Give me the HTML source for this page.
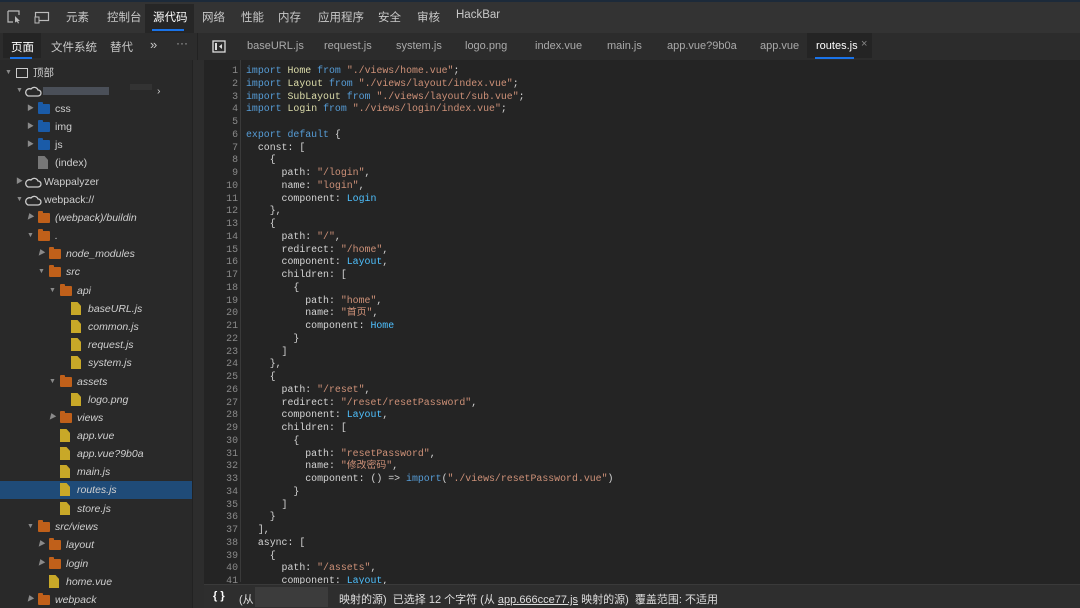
<!DOCTYPE html>
<html><head><meta charset="utf-8"><style>
*{margin:0;padding:0;box-sizing:border-box}
body{width:1080px;height:608px;overflow:hidden;background:#242424;font-family:"Liberation Sans","Noto Sans CJK SC",sans-serif;position:relative;color:#ccc}
.abs{position:absolute}
#top{left:0;top:0;width:1080px;height:33px;background:#333;border-top:2px solid #1c2a3a}
#top span{position:absolute;top:7px;font-size:11.5px;color:#c8c8c8}
#sub{left:0;top:33px;width:1080px;height:27px;background:#2c2c2c}
#side{left:0;top:60px;width:192px;height:548px;background:#292929;overflow:hidden}
#scroll{left:192px;top:60px;width:12px;height:548px;background:#2d2d2d;border-left:1px solid #222}
.row{position:absolute;left:0;width:192px;height:18px;font-size:10.5px;color:#cfcfcf;line-height:18px;white-space:nowrap}
.row.it{font-style:italic}
.arr{position:absolute;top:0;font-size:7px;color:#8a8a8a}
.fold{position:absolute;top:4px;width:12px;height:10px;border-radius:1px}
.fold:before{content:"";position:absolute;left:0;top:-2px;width:5px;height:3px;background:inherit;border-radius:1px 1px 0 0}
.file{position:absolute;top:2px;width:10px;height:13px;background:#c8a828;clip-path:polygon(0 0,65% 0,100% 30%,100% 100%,0 100%)}
.lbl{position:absolute;top:0}
#gut{left:204px;top:60px;width:37px;height:522px;border-right:1px solid #3a3a3a;background:#242424}
#code{left:204px;top:65px;font-family:"Liberation Mono","DejaVu Sans Mono","Noto Sans CJK SC",monospace;font-size:9.9px;line-height:12.75px;white-space:pre;color:#d4d4d4}
.ln{display:inline-block;width:34px;text-align:right;color:#8a8a8a;margin-right:8px}
.k{color:#569cd6}.s{color:#ce9178}.y{color:#dcdcaa}.v{color:#4fc1ff}
#status{left:204px;top:584px;width:876px;height:24px;background:#2e2e2e;border-top:1px solid #3a3a3a;font-size:11px;color:#ddd}
</style></head><body>
<div id="top" class="abs">
<svg class="abs" style="left:7px;top:8px" width="16" height="14"><path d="M1 1h11v4M1 1v11h5" fill="none" stroke="#bbb" stroke-width="1.2"/><path d="M8 6l5 5-2 0 1 2-1 .5-1-2-2 1z" fill="#bbb"/></svg>
<svg class="abs" style="left:34px;top:9px" width="16" height="13"><rect x="1.5" y="1.5" width="13" height="8" fill="none" stroke="#bbb" stroke-width="1.2"/><rect x="1" y="6" width="4" height="6" fill="#333" stroke="#bbb" stroke-width="1"/></svg>
<span style="left:66px">元素</span><span style="left:107px">控制台</span>
<div class="abs" style="left:145px;top:2px;width:49px;height:29px;background:#262626"></div>
<span style="left:153px;color:#fff">源代码</span>
<div class="abs" style="left:152px;top:27px;width:32px;height:2px;background:#1a73e8"></div>
<span style="left:202px">网络</span><span style="left:241px">性能</span><span style="left:278px">内存</span><span style="left:318px">应用程序</span><span style="left:378px">安全</span><span style="left:417px">审核</span><span style="left:456px">HackBar</span>
</div>
<div id="sub" class="abs">
<div class="abs" style="left:3px;top:0;width:38px;height:25px;background:#242424"></div>
<span class="abs" style="left:11px;top:6px;font-size:11.5px;color:#fff">页面</span>
<div class="abs" style="left:10px;top:24px;width:22px;height:2px;background:#1a73e8"></div>
<span class="abs" style="left:51px;top:6px;font-size:11.5px;color:#c8c8c8">文件系统</span>
<span class="abs" style="left:110px;top:6px;font-size:11.5px;color:#c8c8c8">替代</span>
<span class="abs" style="left:150px;top:4px;font-size:13px;color:#c8c8c8">»</span>
<span class="abs" style="left:176px;top:3px;font-size:12px;color:#aaa">···</span>
<div class="abs" style="left:197px;top:0;width:1px;height:27px;background:#222"></div>
<svg class="abs" style="left:212px;top:7px" width="14" height="13"><rect x="1" y="1" width="12" height="11" fill="none" stroke="#ddd" stroke-width="1.3"/><rect x="3" y="3" width="2" height="7" fill="#ddd"/><path d="M10 4v5l-3-2.5z" fill="#ddd"/></svg>
<span class="abs" style="left:247px;top:7px;font-size:11px;color:#aaa">baseURL.js</span>
<span class="abs" style="left:324px;top:7px;font-size:11px;color:#aaa">request.js</span>
<span class="abs" style="left:396px;top:7px;font-size:11px;color:#aaa">system.js</span>
<span class="abs" style="left:465px;top:7px;font-size:11px;color:#aaa">logo.png</span>
<span class="abs" style="left:535px;top:7px;font-size:11px;color:#aaa">index.vue</span>
<span class="abs" style="left:607px;top:7px;font-size:11px;color:#aaa">main.js</span>
<span class="abs" style="left:667px;top:7px;font-size:11px;color:#aaa">app.vue?9b0a</span>
<span class="abs" style="left:760px;top:7px;font-size:11px;color:#aaa">app.vue</span>
<div class="abs" style="left:807px;top:0;width:65px;height:25px;background:#242424"></div>
<span class="abs" style="left:816px;top:7px;font-size:11px;color:#fff">routes.js</span>
<span class="abs" style="left:861px;top:5px;font-size:11px;color:#888">×</span>
<div class="abs" style="left:815px;top:24px;width:39px;height:2px;background:#1a73e8"></div>
</div>
<div id="side" class="abs">
<div class="row" style="top:4px"><span class="arr" style="left:5px">▼</span><span class="abs" style="left:16px;top:4px;width:12px;height:10px;border:1.5px solid #ccc"></span><span class="lbl" style="left:33px">顶部</span></div>
<div class="row" style="top:22px"><span class="arr" style="left:16px">▼</span><svg class="abs" style="left:24px;top:4px" width="18" height="11"><path d="M4 10h10a3 3 0 0 0 0-6 4 4 0 0 0-7-1 3.5 3.5 0 0 0-3 7z" fill="none" stroke="#ccc" stroke-width="1.3"/></svg><span class="abs" style="left:43px;top:5px;width:66px;height:8px;background:#4a4f58"></span><span class="abs" style="left:130px;top:2px;width:22px;height:6px;background:#333"></span><span class="lbl" style="left:157px">›</span></div>
<div class="row" style="top:40px"><span class="arr" style="left:27px">▶</span><span class="fold" style="left:38px;background:#1a5ba8"></span><span class="lbl" style="left:55px">css</span></div>
<div class="row" style="top:58px"><span class="arr" style="left:27px">▶</span><span class="fold" style="left:38px;background:#1a5ba8"></span><span class="lbl" style="left:55px">img</span></div>
<div class="row" style="top:76px"><span class="arr" style="left:27px">▶</span><span class="fold" style="left:38px;background:#1a5ba8"></span><span class="lbl" style="left:55px">js</span></div>
<div class="row" style="top:94px"><span class="file" style="left:38px;background:#777"></span><span class="lbl" style="left:55px">(index)</span></div>
<div class="row" style="top:113px"><span class="arr" style="left:16px">▶</span><svg class="abs" style="left:24px;top:4px" width="18" height="11"><path d="M4 10h10a3 3 0 0 0 0-6 4 4 0 0 0-7-1 3.5 3.5 0 0 0-3 7z" fill="none" stroke="#ccc" stroke-width="1.3"/></svg><span class="lbl" style="left:44px">Wappalyzer</span></div>
<div class="row" style="top:131px"><span class="arr" style="left:16px">▼</span><svg class="abs" style="left:24px;top:4px" width="18" height="11"><path d="M4 10h10a3 3 0 0 0 0-6 4 4 0 0 0-7-1 3.5 3.5 0 0 0-3 7z" fill="none" stroke="#ccc" stroke-width="1.3"/></svg><span class="lbl" style="left:44px">webpack://</span></div>
<div class="row it" style="top:149px"><span class="arr" style="left:27px">▶</span><span class="fold" style="left:38px;background:#c0601a"></span><span class="lbl" style="left:55px">(webpack)/buildin</span></div>
<div class="row it" style="top:167px"><span class="arr" style="left:27px">▼</span><span class="fold" style="left:38px;background:#c0601a"></span><span class="lbl" style="left:55px">.</span></div>
<div class="row it" style="top:185px"><span class="arr" style="left:38px">▶</span><span class="fold" style="left:49px;background:#c0601a"></span><span class="lbl" style="left:66px">node_modules</span></div>
<div class="row it" style="top:203px"><span class="arr" style="left:38px">▼</span><span class="fold" style="left:49px;background:#c0601a"></span><span class="lbl" style="left:66px">src</span></div>
<div class="row it" style="top:222px"><span class="arr" style="left:49px">▼</span><span class="fold" style="left:60px;background:#c0601a"></span><span class="lbl" style="left:77px">api</span></div>
<div class="row it" style="top:240px"><span class="file" style="left:71px"></span><span class="lbl" style="left:88px">baseURL.js</span></div>
<div class="row it" style="top:258px"><span class="file" style="left:71px"></span><span class="lbl" style="left:88px">common.js</span></div>
<div class="row it" style="top:276px"><span class="file" style="left:71px"></span><span class="lbl" style="left:88px">request.js</span></div>
<div class="row it" style="top:294px"><span class="file" style="left:71px"></span><span class="lbl" style="left:88px">system.js</span></div>
<div class="row it" style="top:313px"><span class="arr" style="left:49px">▼</span><span class="fold" style="left:60px;background:#c0601a"></span><span class="lbl" style="left:77px">assets</span></div>
<div class="row it" style="top:331px"><span class="file" style="left:71px"></span><span class="lbl" style="left:88px">logo.png</span></div>
<div class="row it" style="top:349px"><span class="arr" style="left:49px">▶</span><span class="fold" style="left:60px;background:#c0601a"></span><span class="lbl" style="left:77px">views</span></div>
<div class="row it" style="top:367px"><span class="file" style="left:60px"></span><span class="lbl" style="left:77px">app.vue</span></div>
<div class="row it" style="top:385px"><span class="file" style="left:60px"></span><span class="lbl" style="left:77px">app.vue?9b0a</span></div>
<div class="row it" style="top:403px"><span class="file" style="left:60px"></span><span class="lbl" style="left:77px">main.js</span></div>
<div class="row it" style="top:421px;background:#1f4b78"><span class="file" style="left:60px"></span><span class="lbl" style="left:77px">routes.js</span></div>
<div class="row it" style="top:440px"><span class="file" style="left:60px"></span><span class="lbl" style="left:77px">store.js</span></div>
<div class="row it" style="top:458px"><span class="arr" style="left:27px">▼</span><span class="fold" style="left:38px;background:#c0601a"></span><span class="lbl" style="left:55px">src/views</span></div>
<div class="row it" style="top:476px"><span class="arr" style="left:38px">▶</span><span class="fold" style="left:49px;background:#c0601a"></span><span class="lbl" style="left:66px">layout</span></div>
<div class="row it" style="top:495px"><span class="arr" style="left:38px">▶</span><span class="fold" style="left:49px;background:#c0601a"></span><span class="lbl" style="left:66px">login</span></div>
<div class="row it" style="top:513px"><span class="file" style="left:49px"></span><span class="lbl" style="left:66px">home.vue</span></div>
<div class="row it" style="top:531px"><span class="arr" style="left:27px">▶</span><span class="fold" style="left:38px;background:#c0601a"></span><span class="lbl" style="left:55px">webpack</span></div>
</div>
<div id="scroll" class="abs"></div>
<div id="gut" class="abs"></div>
<div id="code" class="abs"><span class="ln">1</span><span class="k">import</span> <span class="y">Home</span> <span class="k">from</span> <span class="s">"./views/home.vue"</span>;
<span class="ln">2</span><span class="k">import</span> <span class="y">Layout</span> <span class="k">from</span> <span class="s">"./views/layout/index.vue"</span>;
<span class="ln">3</span><span class="k">import</span> <span class="y">SubLayout</span> <span class="k">from</span> <span class="s">"./views/layout/sub.vue"</span>;
<span class="ln">4</span><span class="k">import</span> <span class="y">Login</span> <span class="k">from</span> <span class="s">"./views/login/index.vue"</span>;
<span class="ln">5</span>
<span class="ln">6</span><span class="k">export default</span> {
<span class="ln">7</span>  const: [
<span class="ln">8</span>    {
<span class="ln">9</span>      path: <span class="s">"/login"</span>,
<span class="ln">10</span>      name: <span class="s">"login"</span>,
<span class="ln">11</span>      component: <span class="v">Login</span>
<span class="ln">12</span>    },
<span class="ln">13</span>    {
<span class="ln">14</span>      path: <span class="s">"/"</span>,
<span class="ln">15</span>      redirect: <span class="s">"/home"</span>,
<span class="ln">16</span>      component: <span class="v">Layout</span>,
<span class="ln">17</span>      children: [
<span class="ln">18</span>        {
<span class="ln">19</span>          path: <span class="s">"home"</span>,
<span class="ln">20</span>          name: <span class="s">"首页"</span>,
<span class="ln">21</span>          component: <span class="v">Home</span>
<span class="ln">22</span>        }
<span class="ln">23</span>      ]
<span class="ln">24</span>    },
<span class="ln">25</span>    {
<span class="ln">26</span>      path: <span class="s">"/reset"</span>,
<span class="ln">27</span>      redirect: <span class="s">"/reset/resetPassword"</span>,
<span class="ln">28</span>      component: <span class="v">Layout</span>,
<span class="ln">29</span>      children: [
<span class="ln">30</span>        {
<span class="ln">31</span>          path: <span class="s">"resetPassword"</span>,
<span class="ln">32</span>          name: <span class="s">"修改密码"</span>,
<span class="ln">33</span>          component: () =&gt; <span class="k">import</span>(<span class="s">"./views/resetPassword.vue"</span>)
<span class="ln">34</span>        }
<span class="ln">35</span>      ]
<span class="ln">36</span>    }
<span class="ln">37</span>  ],
<span class="ln">38</span>  async: [
<span class="ln">39</span>    {
<span class="ln">40</span>      path: <span class="s">"/assets"</span>,
<span class="ln">41</span>      component: <span class="v">Layout</span>,
</div>
<div id="status" class="abs">
<span class="abs" style="left:9px;top:5px;font-weight:bold;color:#fff">{ }</span>
<span class="abs" style="left:35px;top:6px">(从</span>
<span class="abs" style="left:51px;top:2px;width:73px;height:20px;background:#3c3c3c"></span>
<span class="abs" style="left:135px;top:6px">映射的源) &nbsp;已选择 12 个字符 (从 <u>app.666cce77.js</u> 映射的源) &nbsp;覆盖范围: 不适用</span>
</div>
</body></html>
